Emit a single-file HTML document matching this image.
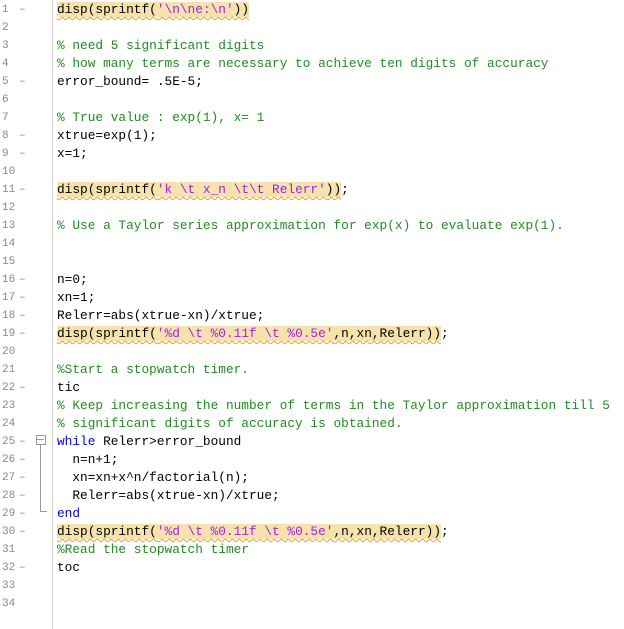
<!DOCTYPE html>
<html><head><meta charset="utf-8"><style>
body{margin:0;width:624px;height:629px;background:#fff;overflow:hidden;position:relative;font-family:"Liberation Mono",monospace;}
.g{position:absolute;left:0;top:0;width:52px;height:629px;border-right:1px solid #d4d4d4;background:#fff}
.ln{position:absolute;left:2px;font-size:11px;color:#888;height:18px;line-height:18px}
.ln b{font-weight:normal;position:absolute;left:17px}
.c{position:absolute;left:57px;font-size:12.8px;color:#000;white-space:pre;height:18px;line-height:18px}
.cm{color:#228b22}.s{color:#a020f0}.k{color:#0000ff}
.h{background:#f6e3ac;text-decoration:underline wavy #e0a040;text-decoration-thickness:1px;text-underline-offset:3px}
</style></head><body>
<div class="g"></div>
<div id="n"></div>
<div style="position:absolute;left:36px;top:435px;width:8px;height:8px;border:1px solid #999;background:#fff"></div>
<div style="position:absolute;left:37px;top:439px;width:7px;height:1px;background:#999"></div>
<div style="position:absolute;left:40px;top:445px;width:1px;height:67px;background:#999"></div>
<div style="position:absolute;left:40px;top:511px;width:7px;height:1px;background:#999"></div>
<div class="c" style="top:1px"><span class="h">disp(sprintf(<span class="s">'\n\ne:\n'</span>))</span></div>
<div class="c cm" style="top:37px">% need 5 significant digits</div>
<div class="c cm" style="top:55px">% how many terms are necessary to achieve ten digits of accuracy</div>
<div class="c" style="top:73px">error_bound= .5E-5;</div>
<div class="c cm" style="top:109px">% True value : exp(1), x= 1</div>
<div class="c" style="top:127px">xtrue=exp(1);</div>
<div class="c" style="top:145px">x=1;</div>
<div class="c" style="top:181px"><span class="h">disp(sprintf(<span class="s">'k \t x_n \t\t Relerr'</span>))</span>;</div>
<div class="c cm" style="top:217px">% Use a Taylor series approximation for exp(x) to evaluate exp(1).</div>
<div class="c" style="top:271px">n=0;</div>
<div class="c" style="top:289px">xn=1;</div>
<div class="c" style="top:307px">Relerr=abs(xtrue-xn)/xtrue;</div>
<div class="c" style="top:325px"><span class="h">disp(sprintf(<span class="s">'%d \t %0.11f \t %0.5e'</span>,n,xn,Relerr))</span>;</div>
<div class="c cm" style="top:361px">%Start a stopwatch timer.</div>
<div class="c" style="top:379px">tic</div>
<div class="c cm" style="top:397px">% Keep increasing the number of terms in the Taylor approximation till 5</div>
<div class="c cm" style="top:415px">% significant digits of accuracy is obtained.</div>
<div class="c" style="top:433px"><span class="k">while</span> Relerr&gt;error_bound</div>
<div class="c" style="top:451px">  n=n+1;</div>
<div class="c" style="top:469px">  xn=xn+x^n/factorial(n);</div>
<div class="c" style="top:487px">  Relerr=abs(xtrue-xn)/xtrue;</div>
<div class="c k" style="top:505px">end</div>
<div class="c" style="top:523px"><span class="h">disp(sprintf(<span class="s">'%d \t %0.11f \t %0.5e'</span>,n,xn,Relerr))</span>;</div>
<div class="c cm" style="top:541px">%Read the stopwatch timer</div>
<div class="c" style="top:559px">toc</div>
<div class="ln" style="top:1px">1<b>–</b></div>
<div class="ln" style="top:19px">2</div>
<div class="ln" style="top:37px">3</div>
<div class="ln" style="top:55px">4</div>
<div class="ln" style="top:73px">5<b>–</b></div>
<div class="ln" style="top:91px">6</div>
<div class="ln" style="top:109px">7</div>
<div class="ln" style="top:127px">8<b>–</b></div>
<div class="ln" style="top:145px">9<b>–</b></div>
<div class="ln" style="top:163px">10</div>
<div class="ln" style="top:181px">11<b>–</b></div>
<div class="ln" style="top:199px">12</div>
<div class="ln" style="top:217px">13</div>
<div class="ln" style="top:235px">14</div>
<div class="ln" style="top:253px">15</div>
<div class="ln" style="top:271px">16<b>–</b></div>
<div class="ln" style="top:289px">17<b>–</b></div>
<div class="ln" style="top:307px">18<b>–</b></div>
<div class="ln" style="top:325px">19<b>–</b></div>
<div class="ln" style="top:343px">20</div>
<div class="ln" style="top:361px">21</div>
<div class="ln" style="top:379px">22<b>–</b></div>
<div class="ln" style="top:397px">23</div>
<div class="ln" style="top:415px">24</div>
<div class="ln" style="top:433px">25<b>–</b></div>
<div class="ln" style="top:451px">26<b>–</b></div>
<div class="ln" style="top:469px">27<b>–</b></div>
<div class="ln" style="top:487px">28<b>–</b></div>
<div class="ln" style="top:505px">29<b>–</b></div>
<div class="ln" style="top:523px">30<b>–</b></div>
<div class="ln" style="top:541px">31</div>
<div class="ln" style="top:559px">32<b>–</b></div>
<div class="ln" style="top:577px">33</div>
<div class="ln" style="top:595px">34</div>
</body></html>
